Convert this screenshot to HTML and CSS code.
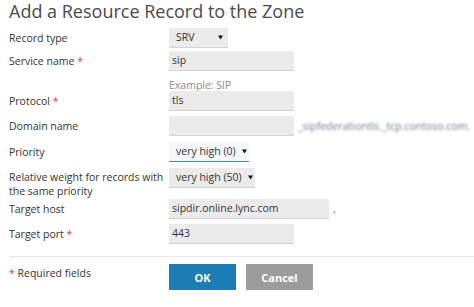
FILE: index.html
```html
<!DOCTYPE html>
<html lang="en">
<head>
<meta charset="utf-8">
<title>Add a Resource Record to the Zone</title>
<link rel="stylesheet" href="styles.css">
</head>
<body>
<div class="page">
  <h1 class="title">Add a Resource Record to the Zone</h1>
  <div class="form">
    <div class="row row-type">
      <div class="label">Record type</div>
      <div class="field">
        <div class="select w-type"><span>SRV</span><svg class="arrow" width="5" height="5" viewBox="0 0 5 5"><path d="M0 0.5H5L2.5 4.5Z"/></svg></div>
      </div>
    </div>
    <div class="row row-service">
      <div class="label">Service name <span class="req">*</span></div>
      <div class="field">
        <div class="input w-std">sip</div>
        <div class="hint">Example: SIP</div>
      </div>
    </div>
    <div class="row row-protocol">
      <div class="label">Protocol <span class="req">*</span></div>
      <div class="field"><div class="input w-std">tls</div></div>
    </div>
    <div class="row row-domain">
      <div class="label">Domain name</div>
      <div class="field field-inline">
        <div class="input w-std"></div>
        <span class="blurred">_sipfederationtls._tcp.contoso.com.</span>
      </div>
    </div>
    <div class="row row-priority">
      <div class="label">Priority</div>
      <div class="field">
        <div class="select select-focus w-prio"><span>very high (0)</span><svg class="arrow" width="5" height="5" viewBox="0 0 5 5"><path d="M0 0.5H5L2.5 4.5Z"/></svg></div>
      </div>
    </div>
    <div class="row row-weight">
      <div class="label label-multi">Relative weight for records with the same priority</div>
      <div class="field">
        <div class="select w-weight"><span>very high (50)</span><svg class="arrow" width="5" height="5" viewBox="0 0 5 5"><path d="M0 0.5H5L2.5 4.5Z"/></svg></div>
      </div>
    </div>
    <div class="row row-host">
      <div class="label">Target host</div>
      <div class="field field-inline">
        <div class="input w-host">sipdir.online.lync.com</div>
        <span class="dot">.</span>
      </div>
    </div>
    <div class="row row-port">
      <div class="label">Target port <span class="req">*</span></div>
      <div class="field"><div class="input w-std">443</div></div>
    </div>
  </div>
  <div class="footer">
    <div class="required-note"><span class="req">*</span> Required fields</div>
    <div class="buttons">
      <button class="btn btn-ok" type="button">OK</button>
      <button class="btn btn-cancel" type="button">Cancel</button>
    </div>
  </div>
</div>
</body>
</html>
```
FILE: styles.css
```css
html, body {
  margin: 0;
  padding: 0;
  background: #ffffff;
}
body {
  font-family: "Open Sans", "Liberation Sans", sans-serif;
  font-size: 10.5px;
  color: #333333;
}
.page {
  padding: 0 0 0 9px;
}
.title {
  margin: 0;
  font-size: 18px;
  line-height: 23px;
  font-weight: 400;
  color: #4a4a4a;
}
.form {
  margin-top: 5px;
}
.row {
  display: flex;
  align-items: flex-start;
}
.label {
  width: 160px;
  flex: none;
  line-height: 20px;
  white-space: nowrap;
}
.label-multi {
  white-space: normal;
  line-height: 14px;
  padding-top: 2px;
  width: 158px;
  margin-right: 2px;
}
.req {
  color: #d9433f;
}
.field {
  display: flex;
  flex-direction: column;
}
.field-inline {
  flex-direction: row;
  align-items: center;
}
.input, .select {
  box-sizing: border-box;
  height: 20px;
  background: #ebebeb;
  border-bottom: 1px solid #d2d2d2;
  line-height: 19px;
  white-space: nowrap;
  color: #333333;
}
.input {
  padding: 0 3px;
}
.select {
  display: flex;
  align-items: center;
  padding: 0 0 0 7px;
}
.select span {
  flex: 1;
}
.select-focus {
  background: #f4f8fb;
  border-bottom: 1px solid #3f8ccb;
}
.arrow {
  fill: #111111;
  flex: none;
  margin-left: 6px;
  margin-right: 5px;
}
.w-type { width: 59px; }
.w-std { width: 125px; }
.w-prio { width: 80px; }
.w-weight { width: 86px; }
.w-host { width: 160px; }
.hint {
  height: 20px;
  line-height: 14px;
  padding-top: 7px;
  box-sizing: border-box;
  color: #8a8a8a;
}
.blurred {
  margin-left: 4px;
  color: #6f7d8a;
  filter: blur(1px);
  white-space: nowrap;
  font-size: 10.5px;
}
.dot {
  margin-left: 4px;
}
.row-type { margin-bottom: 3px; }
.row-service { margin-bottom: 0; }
.row-protocol { margin-bottom: 5px; }
.row-domain { margin-bottom: 6px; }
.row-priority { margin-bottom: 6px; }
.row-weight { margin-bottom: 1px; }
.row-host { margin-bottom: 5px; }
.row-port { margin-bottom: 12px; }
.footer {
  border-top: 1px solid #e6e6e6;
  padding-top: 7px;
  display: flex;
  align-items: flex-start;
}
.required-note {
  width: 160px;
  flex: none;
  line-height: 18px;
}
.buttons {
  display: flex;
  gap: 10px;
}
.btn {
  width: 67px;
  height: 26px;
  border: none;
  margin: 0;
  padding: 0;
  font-family: "Open Sans", "Liberation Sans", sans-serif;
  font-size: 11px;
  font-weight: 700;
  color: #ffffff;
  cursor: pointer;
}
.btn-ok {
  background: #1b7db3;
}
.btn-cancel {
  background: #9c9c9c;
}
```
